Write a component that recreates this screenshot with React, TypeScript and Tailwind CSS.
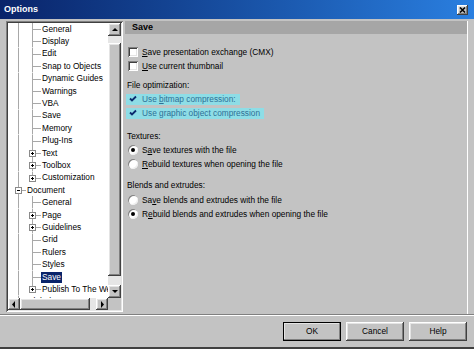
import React from 'react'

type TreeItem = {
  label: string
  level: 0 | 1
  box?: 'plus' | 'minus'
  last?: boolean
  selected?: boolean
}

const items: TreeItem[] = [
  { label: 'General', level: 1 },
  { label: 'Display', level: 1 },
  { label: 'Edit', level: 1 },
  { label: 'Snap to Objects', level: 1 },
  { label: 'Dynamic Guides', level: 1 },
  { label: 'Warnings', level: 1 },
  { label: 'VBA', level: 1 },
  { label: 'Save', level: 1 },
  { label: 'Memory', level: 1 },
  { label: 'Plug-Ins', level: 1 },
  { label: 'Text', level: 1, box: 'plus' },
  { label: 'Toolbox', level: 1, box: 'plus' },
  { label: 'Customization', level: 1, box: 'plus', last: true },
  { label: 'Document', level: 0, box: 'minus' },
  { label: 'General', level: 1 },
  { label: 'Page', level: 1, box: 'plus' },
  { label: 'Guidelines', level: 1, box: 'plus' },
  { label: 'Grid', level: 1 },
  { label: 'Rulers', level: 1 },
  { label: 'Styles', level: 1 },
  { label: 'Save', level: 1, selected: true },
  { label: 'Publish To The Web', level: 1, box: 'plus', last: true },
  { label: 'Global', level: 0, box: 'plus' }
]

const raised =
  'shadow-[inset_-1px_-1px_0_#404040,inset_1px_1px_0_#ffffff,inset_-2px_-2px_0_#808080,inset_2px_2px_0_#e4e4e4]'
const sunken =
  'shadow-[inset_1px_1px_0_#808080,inset_-1px_-1px_0_#ffffff,inset_2px_2px_0_#404040,inset_-2px_-2px_0_#e4e4e4]'

function ExpandBox({ cx, cy, kind }: { cx: number; cy: number; kind: 'plus' | 'minus' }) {
  return (
    <g>
      <rect x={cx - 3} y={cy - 3} width={6} height={6} fill="#ffffff" stroke="#8a8a8a" />
      <line x1={cx - 1.5} y1={cy} x2={cx + 1.5} y2={cy} stroke="#000" />
      {kind === 'plus' && <line x1={cx} y1={cy - 1.5} x2={cx} y2={cy + 1.5} stroke="#000" />}
    </g>
  )
}

function TreeRow({ item }: { item: TreeItem }) {
  const h = 12.4
  const m = 6.5
  const line = '#a8a8a8'
  return (
    <div className="h-[12.4px] flex items-center whitespace-nowrap">
      <svg width={item.level === 1 ? 33 : 18} height={h} className="shrink-0">
        <line x1={10.5} y1={0} x2={10.5} y2={h} stroke={line} />
        {item.level === 1 && (
          <>
            <line x1={24.5} y1={0} x2={24.5} y2={item.last ? m : h} stroke={line} />
            <line x1={24.5} y1={m} x2={33} y2={m} stroke={line} />
            {item.box && <ExpandBox cx={24.5} cy={m} kind={item.box} />}
          </>
        )}
        {item.level === 0 && (
          <>
            <line x1={10.5} y1={m} x2={18} y2={m} stroke={line} />
            {item.box && <ExpandBox cx={10.5} cy={m} kind={item.box} />}
          </>
        )}
      </svg>
      <span
        className={
          item.selected ? 'bg-[#0a246a] text-white px-[1px] leading-[11px]' : 'px-[1px] leading-[11px]'
        }
      >
        {item.label}
      </span>
    </div>
  )
}

function Arrow({ dir }: { dir: 'up' | 'down' | 'left' | 'right' }) {
  const pts = {
    up: '2,5 8,5 5,2',
    down: '2,2 8,2 5,5',
    left: '5,1 5,8 2,4.5',
    right: '3,1 3,8 6,4.5'
  }[dir]
  const vertical = dir === 'up' || dir === 'down'
  return (
    <svg width={vertical ? 10 : 8} height={vertical ? 7 : 9}>
      <polygon points={pts} fill="#000" />
    </svg>
  )
}

function ScrollButton({ dir, className }: { dir: 'up' | 'down' | 'left' | 'right'; className: string }) {
  return (
    <div className={`${className} bg-[#c3c3c3] ${raised} flex items-center justify-center`}>
      <Arrow dir={dir} />
    </div>
  )
}

function TreePanel() {
  return (
    <div className={`w-[117px] h-[291px] p-[2px] ${sunken} shrink-0`}>
      <div className="grid grid-cols-[100px_13px] grid-rows-[275px_12px] h-full">
        <div className="bg-white overflow-hidden">
          {items.map((item, i) => (
            <TreeRow key={i} item={item} />
          ))}
        </div>
        <div className="flex flex-col bg-[#e6e6e6]">
          <ScrollButton dir="up" className="h-[13px]" />
          <div className="h-[7px]" />
          <div className={`flex-1 bg-[#c3c3c3] ${raised}`} />
          <div className="h-[9px]" />
          <ScrollButton dir="down" className="h-[13px]" />
        </div>
        <div className="flex bg-[#e6e6e6]">
          <ScrollButton dir="left" className="w-[12px]" />
          <div className={`w-[70px] bg-[#c3c3c3] ${raised}`} />
          <div className="flex-1" />
          <ScrollButton dir="right" className="w-[12px]" />
        </div>
        <div className="bg-[#c3c3c3]" />
      </div>
    </div>
  )
}

function Label({ text, u }: { text: string; u: number }) {
  return (
    <span>
      {text.slice(0, u)}
      <span className="underline underline-offset-1">{text[u]}</span>
      {text.slice(u + 1)}
    </span>
  )
}

function CheckRow({ text, u, checked, highlight }: { text: string; u: number; checked?: boolean; highlight?: boolean }) {
  return (
    <div className="h-[14px] flex items-center">
      <div
        className={
          highlight
            ? 'flex items-center gap-[4px] bg-[#8edde6] text-[#2f7096] h-[11px] pl-[2px] pr-[4px] -ml-[2px]'
            : 'flex items-center gap-[4px]'
        }
      >
        <div
          className={
            highlight
              ? 'w-[10px] h-[10px] flex items-center justify-center'
              : `w-[10px] h-[10px] bg-white ${sunken}`
          }
        >
          {checked && (
            <svg width="8" height="8" viewBox="0 0 8 8">
              <path d="M1 3.5 L3 5.5 L7 1.5" stroke="#0b2a6e" strokeWidth="1.8" fill="none" />
            </svg>
          )}
        </div>
        <Label text={text} u={u} />
      </div>
    </div>
  )
}

function RadioRow({ text, u, selected }: { text: string; u: number; selected?: boolean }) {
  return (
    <div className="h-[14px] flex items-center gap-[4px]">
      <div className="w-[10px] h-[10px] rounded-full bg-white shadow-[inset_1px_1px_0_#808080,inset_-1px_-1px_0_#eeeeee] flex items-center justify-center">
        {selected && <div className="w-[4px] h-[4px] rounded-full bg-black" />}
      </div>
      <Label text={text} u={u} />
    </div>
  )
}

function DialogButton({ label, isDefault }: { label: string; isDefault?: boolean }) {
  return (
    <div
      className={`w-[58px] h-[19px] flex items-center justify-center bg-[#c3c3c3] ${raised} ${
        isDefault ? 'outline outline-1 outline-black -outline-offset-1' : ''
      }`}
    >
      {label}
    </div>
  )
}

export default function App() {
  return (
    <div className="w-[474px] h-[349px] bg-[#c3c3c3] flex flex-col overflow-hidden font-['Liberation_Sans',Arial,sans-serif] text-[8.3px] text-black border-b-2 border-b-[#404040]">
      {/* Title bar */}
      <div className="h-[19px] shrink-0 bg-linear-to-r from-[#0a246a] to-[#2a7fe0] flex items-center justify-between pl-[4px] pr-[6px]">
        <span className="text-white font-bold text-[9px]">Options</span>
        <div className={`w-[11px] h-[10px] bg-[#c3c3c3] ${raised} flex items-center justify-center`}>
          <svg width="7" height="6" viewBox="0 0 7 6">
            <path d="M1 0.5 L6 5.5 M6 0.5 L1 5.5" stroke="#000" strokeWidth="1.5" />
          </svg>
        </div>
      </div>

      {/* Main area */}
      <div className="h-[296px] shrink-0 flex pl-[6px] pt-[2px] border-b border-b-[#808080] shadow-[0_1px_0_#ffffff]">
        <TreePanel />
        <div className="w-[343px] ml-[2px] border-r border-r-white flex flex-col">
          <div className="h-[13px] bg-[#a6a6a6] flex items-center pl-[7px] font-bold text-[9px]">Save</div>
          <div className="pl-[3px] flex flex-col">
            <div className="mt-[11px]">
              <CheckRow text="Save presentation exchange (CMX)" u={0} />
              <CheckRow text="Use current thumbnail" u={0} />
            </div>
            <div className="h-[13px] mt-[6px] flex items-center -ml-[1px]">File optimization:</div>
            <CheckRow text="Use bitmap compression:" u={4} checked highlight />
            <CheckRow text="Use graphic object compression" u={4} checked highlight />
            <div className="h-[13px] mt-[10px] flex items-center -ml-[1px]">Textures:</div>
            <RadioRow text="Save textures with the file" u={1} selected />
            <RadioRow text="Rebuild textures when opening the file" u={0} />
            <div className="h-[13px] mt-[8px] flex items-center -ml-[1px]">Blends and extrudes:</div>
            <div className="mt-[1px]">
              <RadioRow text="Save blends and extrudes with the file" u={2} />
              <RadioRow text="Rebuild blends and extrudes when opening the file" u={1} selected />
            </div>
          </div>
        </div>
      </div>

      {/* Buttons */}
      <div className="flex justify-end gap-[5px] pt-[7px] pr-[7px]">
        <DialogButton label="OK" isDefault />
        <DialogButton label="Cancel" />
        <DialogButton label="Help" />
      </div>
    </div>
  )
}
